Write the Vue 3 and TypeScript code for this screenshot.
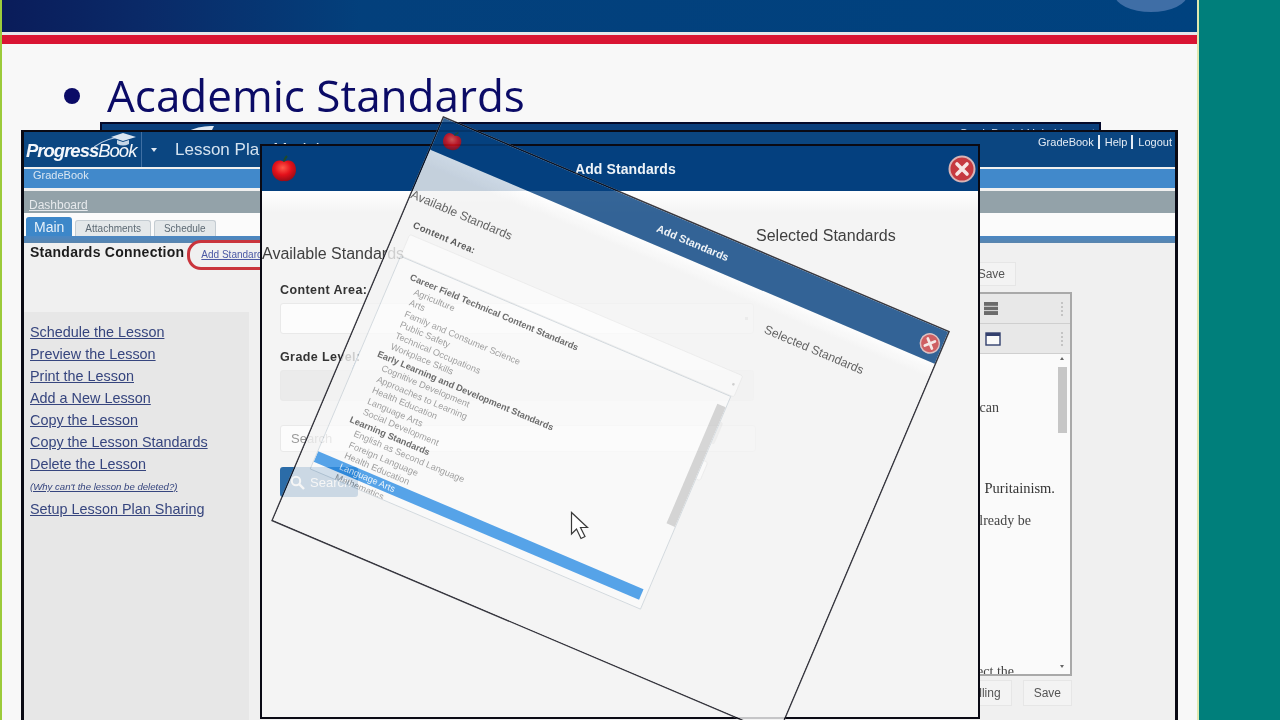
<script setup lang="ts">
// Slide with the lesson plan screen behind it and the Add Standards dialog flying in
const sideLinks = [
  "Schedule the Lesson",
  "Preview the Lesson",
  "Print the Lesson",
  "Add a New Lesson",
  "Copy the Lesson",
  "Copy the Lesson Standards",
  "Delete the Lesson",
];

type Row = { text: string; group?: boolean; picked?: boolean };

const contentAreas: Row[] = [
  { text: "Career Field Technical Content Standards", group: true },
  { text: "Agriculture" },
  { text: "Arts" },
  { text: "Family and Consumer Science" },
  { text: "Public Safety" },
  { text: "Technical Occupations" },
  { text: "Workplace Skills" },
  { text: "Early Learning and Development Standards", group: true },
  { text: "Cognitive Development" },
  { text: "Approaches to Learning" },
  { text: "Health Education" },
  { text: "Language Arts" },
  { text: "Social Development" },
  { text: "Learning Standards", group: true },
  { text: "English as Second Language" },
  { text: "Foreign Language" },
  { text: "Health Education" },
  { text: "Language Arts", picked: true },
  { text: "Mathematics" },
];

// same dialog twice: the settled one and the rotated, half faded one
const dialogs = [
  { kind: "settled", open: false },
  { kind: "tilted", open: true },
];
</script>

<template>
  <div class="stage">
    <svg class="defs" width="0" height="0">
      <defs>
        <radialGradient id="apple-red" cx="45%" cy="35%" r="70%">
          <stop offset="0" stop-color="#ff5a4a" />
          <stop offset="0.5" stop-color="#e3101a" />
          <stop offset="1" stop-color="#8c0b16" />
        </radialGradient>
      </defs>
    </svg>

    <section class="slide">
      <div class="banner"><span class="banner-glow"></span></div>
      <div class="rule-white"></div>
      <div class="rule-red"></div>
      <h1 class="title"><span class="bullet"></span>Academic Standards</h1>

      <div class="back-screen">
        <svg class="back-cap" width="50" height="10" viewBox="0 0 50 10">
          <path d="M2 10 Q18 1 34 2 L30 10 Z" fill="#dfe8f2" />
        </svg>
        <span class="back-links">GradeBook | Help | Logout</span>
      </div>

      <div class="screen">
        <header class="app-head">
          <div class="brand">
            <span class="brand-name"><b>Progress</b>Book</span>
            <svg class="brand-cap" width="44" height="16" viewBox="0 0 44 16">
              <path d="M0 15 Q14 5 30 5" fill="none" stroke="#b9cde2" stroke-width="1.2" />
              <path d="M17 5 L29 1 L42 5 L29 9 Z" fill="#dbe6f1" />
              <path d="M23 8 V12 Q29 15 35 12 V8 L29 10 Z" fill="#c6d6e6" />
            </svg>
          </div>
          <span class="caret"></span>
          <span class="app-title">Lesson Plan Module</span>
          <nav class="app-links">
            <span>GradeBook</span><span>Help</span><span>Logout</span>
          </nav>
        </header>
        <div class="crumb-bar">GradeBook</div>
        <div class="dash-bar"><a>Dashboard</a></div>
        <div class="tab-row">
          <span class="tab active">Main</span>
          <span class="tab">Attachments</span>
          <span class="tab">Schedule</span>
        </div>
        <div class="tab-strip"></div>

        <div class="work">
          <aside class="side">
            <div class="side-head">
              <strong>Standards Connection</strong>
              <span class="pill"><a>Add Standards</a></span>
            </div>
            <ul class="side-links">
              <li v-for="link in sideLinks" :key="link"><a>{{ link }}</a></li>
              <li class="why"><a>(Why can't the lesson be deleted?)</a></li>
              <li><a>Setup Lesson Plan Sharing</a></li>
            </ul>
          </aside>

          <div class="editor">
            <button class="btn btn-top">Save</button>
            <div class="panel">
              <div class="bar">
                <svg width="16" height="13" viewBox="0 0 16 13">
                  <rect x="1" y="0" width="14" height="13" fill="#6b6b6b" />
                  <path d="M1 4.3 H15 M1 8.6 H15" stroke="#dcdcdc" />
                </svg>
                <i class="grip"></i>
              </div>
              <div class="bar">
                <svg width="16" height="14" viewBox="0 0 16 14">
                  <rect x="1" y="1" width="14" height="12" fill="#fafafa" stroke="#33406e" stroke-width="1.4" />
                  <rect x="1" y="1" width="14" height="3" fill="#33406e" />
                </svg>
                <i class="grip"></i>
              </div>
              <div class="doc">
                <div class="doc-text">
                  <p class="l1">American</p>
                  <p class="l2">Puritainism.</p>
                  <p class="l3">already be</p>
                  <p class="l4">expect the</p>
                </div>
                <div class="doc-scroll"><span class="doc-thumb"></span></div>
              </div>
            </div>
            <div class="foot-btns">
              <button class="btn">Polling</button>
              <button class="btn">Save</button>
            </div>
          </div>
        </div>
      </div>

      <div v-for="d in dialogs" :key="d.kind" class="dialog" :class="d.kind">
        <header class="dlg-head">
          <svg class="apple" width="26" height="28" viewBox="0 0 26 28">
            <path d="M13 8 Q13 4 16 1" fill="none" stroke="#1f4a2a" stroke-width="2" />
            <path d="M13 7 C6 3 1 8 1 15 C1 22 7 27 13 26 C19 27 25 22 25 15 C25 8 20 3 13 7 Z" fill="url(#apple-red)" />
          </svg>
          <span class="dlg-title">Add Standards</span>
          <svg class="close" width="28" height="28" viewBox="0 0 28 28">
            <circle cx="14" cy="14" r="12.5" fill="#c63a40" stroke="#d8b4b6" stroke-width="2" />
            <path d="M9 9 L19 19 M19 9 L9 19" stroke="#f7e6e4" stroke-width="3.6" stroke-linecap="round" />
          </svg>
        </header>
        <div class="dlg-body">
          <div class="col-left">
            <h2>Available Standards</h2>
            <label>Content Area:</label>
            <div class="field">
              <span class="field-dot"></span>
              <div v-if="d.open" class="drop">
                <div v-for="(row, i) in contentAreas" :key="i" class="drop-row" :class="{ group: row.group, picked: row.picked }">{{ row.text }}</div>
                <div class="drop-scroll"></div>
              </div>
            </div>
            <label class="grade">Grade Level:</label>
            <div class="field field-off"></div>
            <div class="field search-box">Search</div>
            <button class="search-btn">
              <svg width="15" height="15" viewBox="0 0 15 15">
                <circle cx="6" cy="6" r="4.2" fill="none" stroke="#fff" stroke-width="2" />
                <path d="M9.2 9.2 L14 14" stroke="#fff" stroke-width="2.4" />
              </svg>
              Search
            </button>
          </div>
          <div class="col-right"><h2>Selected Standards</h2></div>
        </div>
      </div>

      <svg class="pointer" width="20" height="30" viewBox="0 0 20 30">
        <path d="M1.5 1.5 V23 L6.5 18 L11 27.5 L15 25.5 L10.5 16.5 L17.5 16.5 Z" fill="#fff" stroke="#3a3a3a" stroke-width="1.2" />
      </svg>
    </section>

    <div class="teal"></div>
  </div>
</template>

<style>
html,
body {
  margin: 0;
  background: #007f7b;
}
</style>

<style scoped>
.stage {
  width: 1280px;
  height: 720px;
  display: flex;
  overflow: hidden;
  font-family: "Liberation Sans", Arial, sans-serif;
  filter: blur(0.45px);
}
.defs {
  position: absolute;
}
a {
  text-decoration: underline;
}

/* slide */
.slide {
  position: relative;
  width: 1199px;
  height: 720px;
  box-sizing: border-box;
  background: #f8f8f8;
  border-left: 2px solid #9ccb3b;
  border-right: 2px solid #dfe9b0;
  flex: none;
}
.teal {
  flex: 1;
  background: #007f7b;
}
.banner {
  height: 32px;
  position: relative;
  overflow: hidden;
  background: linear-gradient(90deg, #0a1c5a 0, #0a2a68 12%, #03407c 30%, #00427f 100%);
}
.banner-glow {
  position: absolute;
  left: 1113px;
  top: -22px;
  width: 72px;
  height: 34px;
  border-radius: 50%;
  background: #3f6ea6;
}
.rule-white {
  height: 3px;
  background: #e6e6ea;
}
.rule-red {
  height: 9px;
  background: #d91533;
}
.title {
  margin: 0;
  padding: 22px 0 0 105px;
  display: flex;
  align-items: center;
  position: relative;
  font-family: "Open Sans", "DejaVu Sans", sans-serif;
  font-weight: 400;
  font-size: 44px;
  line-height: 58px;
  color: #0b0b66;
}
.bullet {
  position: absolute;
  left: 62px;
  top: 44px;
  width: 16px;
  height: 16px;
  border-radius: 50%;
  background: #0b0b66;
}

/* window peeking out behind the main screen */
.back-screen {
  position: absolute;
  left: 98px;
  top: 122px;
  width: 1001px;
  height: 10px;
  box-sizing: border-box;
  border: 2px solid #050a2a;
  border-bottom: 0;
  background: #0a3f7c;
  overflow: hidden;
}
.back-cap {
  position: absolute;
  left: 78px;
  top: 0;
}
.back-links {
  position: absolute;
  right: 4px;
  top: 3px;
  font-size: 11.5px;
  color: #d8e2ee;
}

/* lesson plan screen */
.screen {
  position: absolute;
  left: 19px;
  top: 130px;
  width: 1157px;
  height: 600px;
  box-sizing: border-box;
  border: 2px solid #0a0a14;
  border-width: 2px 3px;
  background: #f0f0f0;
  display: flex;
  flex-direction: column;
}
.app-head {
  height: 35px;
  flex: none;
  display: flex;
  align-items: center;
  background: #0b4681;
  color: #d5e3f0;
  padding-right: 3px;
}
.brand {
  position: relative;
  width: 117px;
  height: 35px;
  flex: none;
  border-right: 1px solid #3f6fa3;
}
.brand-name {
  position: absolute;
  left: 2px;
  top: 7px;
  font-size: 18.5px;
  line-height: 24px;
  font-style: italic;
  letter-spacing: -1px;
  color: #f4f7fb;
  white-space: nowrap;
}
.brand-cap {
  position: absolute;
  left: 70px;
  top: 0;
}
.caret {
  width: 0;
  height: 0;
  margin-left: 9px;
  border: 3.5px solid transparent;
  border-top: 4px solid #dfe8f2;
  border-bottom: 0;
}
.app-title {
  margin-left: 18px;
  font-size: 17px;
}
.app-links {
  margin-left: auto;
  align-self: flex-start;
  margin-top: 3px;
  display: flex;
  font-size: 11px;
  line-height: 14px;
  color: #e4ecf5;
}
.app-links span + span {
  margin-left: 4px;
  padding-left: 5px;
  border-left: 2px solid #e4ecf5;
}
.crumb-bar {
  height: 19px;
  flex: none;
  margin-top: 2px;
  padding-left: 9px;
  background: #4189cb;
  color: #d9e6f2;
  font-size: 11px;
  line-height: 12px;
}
.dash-bar {
  height: 22px;
  flex: none;
  margin-top: 3px;
  padding-left: 5px;
  background: #93a2a9;
  color: #e6e9ec;
  font-size: 12px;
  line-height: 28px;
}
.tab-row {
  height: 23px;
  flex: none;
  padding-left: 2px;
  background: #fbfbfb;
  display: flex;
  align-items: flex-end;
  gap: 3px;
}
.tab {
  height: 15px;
  padding: 0 9px;
  border: 1px solid #c4ccd2;
  border-bottom: 0;
  border-radius: 3px 3px 0 0;
  background: #e4e8ea;
  color: #5d6a74;
  font-size: 10px;
  line-height: 16px;
}
.tab.active {
  height: 17px;
  margin-top: -2px;
  padding: 2px 8px 0;
  border: 0;
  background: #3d87c9;
  color: #e5f0f9;
  font-size: 14px;
}
.tab-strip {
  height: 7px;
  flex: none;
  background: linear-gradient(#4a87c4, #5a85ad);
}
.work {
  flex: 1;
  display: flex;
}
.side {
  width: 236px;
  flex: none;
  padding-right: 11px;
  box-sizing: border-box;
  display: flex;
  flex-direction: column;
}
.side-head {
  height: 69px;
  flex: none;
  padding-left: 6px;
  display: flex;
  align-items: flex-start;
}
.side-head strong {
  margin-top: 1px;
  font-size: 14px;
  line-height: 16px;
  letter-spacing: 0.25px;
  color: #1c1c1c;
  white-space: nowrap;
}
.pill {
  margin: -3px 0 0 3px;
  padding: 6px 20px 6px 11px;
  border: 3px solid #c9343c;
  border-radius: 14px;
  font-size: 10px;
  line-height: 12px;
  color: #4a58a4;
  white-space: nowrap;
}
.side-links {
  flex: 1;
  margin: 0;
  padding: 9px 0 0 6px;
  list-style: none;
  background: #e7e7e7;
  font-size: 14.4px;
  line-height: 22px;
  color: #36457e;
  white-space: nowrap;
}
.side-links .why {
  font-size: 9.6px;
  font-style: italic;
  line-height: 23px;
}
.editor {
  flex: 1;
  display: flex;
  flex-direction: column;
  align-items: flex-end;
  padding-right: 103px;
}
.btn {
  height: 26px;
  padding: 0 10px;
  border: 1px solid #e6e6e6;
  background: #f3f3f3;
  color: #555;
  font-family: inherit;
  font-size: 12px;
}
.btn-top {
  height: 24px;
  margin: 19px 56px 0 0;
}
.panel {
  margin-top: 6px;
  width: 800px;
  height: 384px;
  box-sizing: border-box;
  border: 2px solid #a9a9a9;
  display: flex;
  flex-direction: column;
  background: #fafafa;
}
.bar {
  height: 30px;
  flex: none;
  box-sizing: border-box;
  border-bottom: 1px solid #cfcfcf;
  background: #e8e8e8;
  display: flex;
  align-items: center;
  justify-content: flex-end;
  gap: 62px;
  padding-right: 7px;
}
.bar:nth-child(2) {
  gap: 60px;
}
.grip {
  width: 2px;
  height: 14px;
  background: repeating-linear-gradient(#c4c4c4 0 2px, transparent 2px 4px);
}
.doc {
  flex: 1;
  display: flex;
  overflow: hidden;
  background: #fafafa;
}
.doc-text {
  flex: 1;
  font-family: "Liberation Serif", serif;
  font-size: 14px;
  line-height: 16px;
  color: #444;
  text-align: right;
  white-space: nowrap;
}
.doc-text p {
  margin: 0;
}
.l1 {
  padding: 46px 57px 0 0;
}
.l2 {
  padding: 64px 1px 0 0;
  color: #333;
  font-size: 14.5px;
}
.l3 {
  padding: 17px 25px 0 0;
}
.l4 {
  padding: 135px 42px 0 0;
}
.doc-scroll {
  position: relative;
  width: 14px;
  flex: none;
  padding: 13px 0 0 2px;
  box-sizing: border-box;
}
.doc-scroll::before,
.doc-scroll::after {
  content: "";
  position: absolute;
  left: 4px;
  border: 2.5px solid transparent;
}
.doc-scroll::before {
  top: 3px;
  border-bottom: 3px solid #666;
  border-top: 0;
}
.doc-scroll::after {
  bottom: 6px;
  border-top: 3px solid #666;
  border-bottom: 0;
}
.doc-thumb {
  display: block;
  width: 9px;
  height: 66px;
  background: #c6c6c6;
}
.foot-btns {
  margin-top: 4px;
  display: flex;
  gap: 11px;
}

/* dialog */
.dialog {
  position: absolute;
  width: 720px;
  height: 575px;
  box-sizing: border-box;
  border: 2px solid #0a0a14;
  background: #f3f3f3;
  display: flex;
  flex-direction: column;
}
.settled {
  left: 258px;
  top: 144px;
}
.tilted {
  left: 441px;
  top: 116px;
  transform-origin: 0 0;
  transform: rotate(23deg) scale(0.765);
  opacity: 0.8;
}
.dlg-head {
  height: 45px;
  flex: none;
  position: relative;
  display: flex;
  align-items: center;
  justify-content: space-between;
  padding: 0 2px 0 9px;
  background: #04407f;
}
.dlg-title {
  position: absolute;
  left: 313px;
  color: #eef3f8;
  font-size: 14px;
  font-weight: 700;
  letter-spacing: 0.1px;
  white-space: nowrap;
}
.dlg-body {
  flex: 1;
  display: flex;
  background: linear-gradient(#fff 0, #f4f4f4 22px);
}
.col-left {
  width: 493px;
  flex: none;
  padding: 53px 0 0 18px;
  box-sizing: border-box;
}
.col-right {
  padding: 35px 0 0 1px;
}
h2 {
  margin: 0;
  font-size: 16px;
  font-weight: 400;
  line-height: 20px;
  color: #3f3f3f;
  white-space: nowrap;
}
.col-left h2 {
  margin-left: -18px;
}
label {
  display: block;
  margin-top: 18px;
  font-size: 12.5px;
  font-weight: 700;
  letter-spacing: 0.4px;
  line-height: 16px;
  color: #333;
}
.grade {
  margin-top: 15px;
}
.field {
  position: relative;
  width: 474px;
  height: 31px;
  margin-top: 5px;
  box-sizing: border-box;
  border: 1px solid #e9e9e9;
  border-radius: 3px;
  background: #fcfcfc;
}
.field-dot {
  position: absolute;
  right: 5px;
  top: 13px;
  width: 3px;
  height: 3px;
  background: #c8c8c8;
}
.field-off {
  background: #ebebeb;
}
.search-box {
  width: 476px;
  height: 27px;
  margin-top: 24px;
  padding-left: 10px;
  font-size: 13px;
  line-height: 25px;
  color: #9a9a9a;
}
.search-btn {
  display: flex;
  align-items: center;
  gap: 5px;
  width: 78px;
  height: 30px;
  margin-top: 15px;
  padding: 0 0 0 10px;
  border: 0;
  border-radius: 3px;
  background: #2b6ca8;
  color: #fff;
  font-family: inherit;
  font-size: 13px;
}
.drop {
  position: absolute;
  z-index: 2;
  left: -1px;
  top: 30px;
  width: 470px;
  height: 303px;
  box-sizing: border-box;
  border: 1px solid #c3cdd4;
  padding-top: 12px;
  background: #fbfbfb;
  overflow: hidden;
  font-size: 12px;
}
.drop-row {
  position: relative;
  height: 15.5px;
  line-height: 15.5px;
  padding-left: 34px;
  color: #8a8a8a;
  white-space: nowrap;
}
.drop-row.group {
  padding-left: 22px;
  font-weight: 700;
  color: #4a4a4a;
}
.drop-row.picked {
  margin-right: 6px;
  background: #2f8fe6;
  color: #eaf4fc;
}
.drop-scroll {
  position: absolute;
  right: 0;
  top: 15px;
  width: 12px;
  height: 170px;
  background: #cdcdcd;
}
.pointer {
  position: absolute;
  left: 568px;
  top: 511px;
}
</style>
